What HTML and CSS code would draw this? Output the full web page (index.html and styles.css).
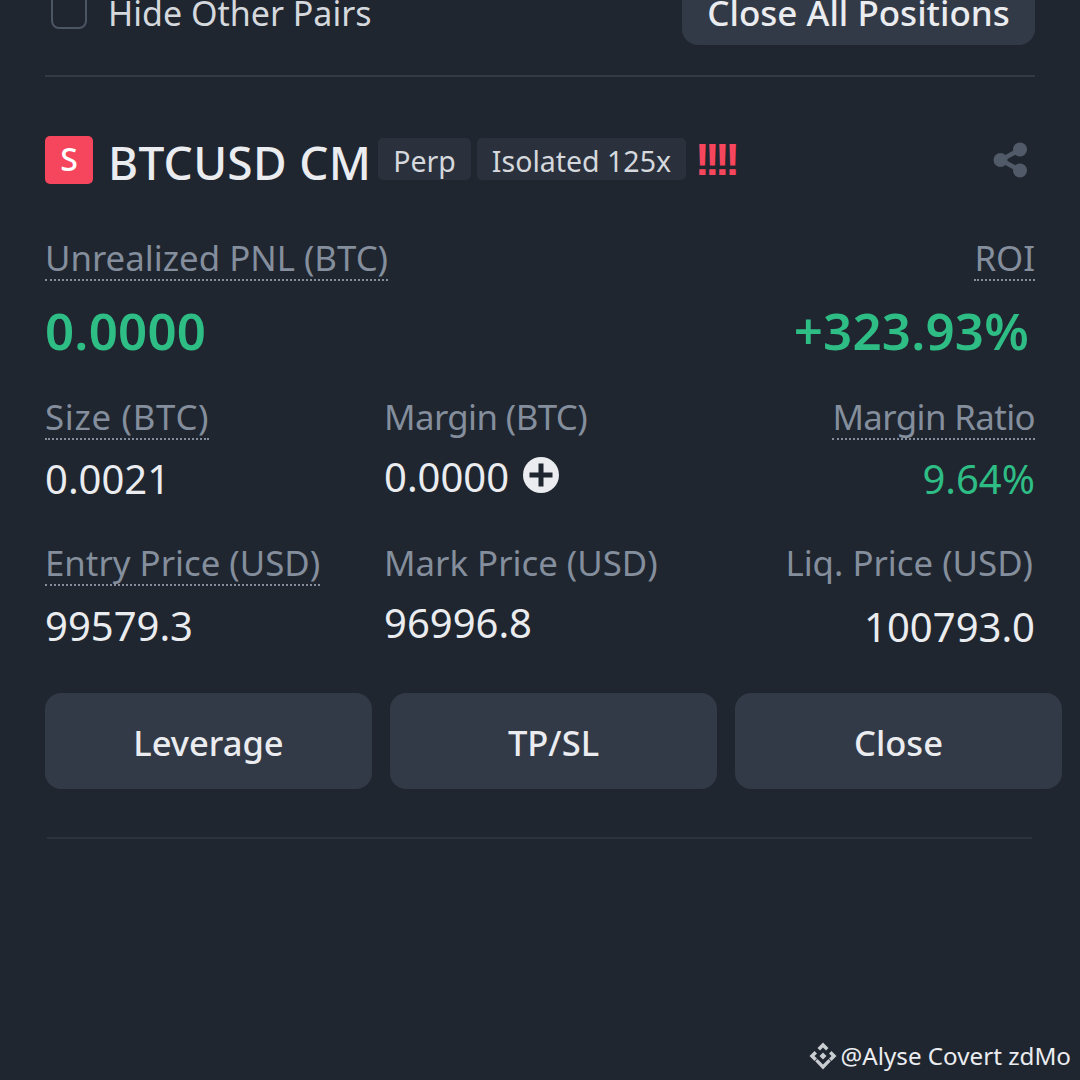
FILE: index.html
```html
<!DOCTYPE html>
<html lang="en">
<head>
  <meta charset="UTF-8">
  <meta name="viewport" content="width=device-width, initial-scale=1.0">
  <title>Positions</title>
  <link rel="stylesheet" href="styles.css">
</head>
<body>
  <div class="page">
    <div class="top-bar">
      <label class="hide-pairs"><span class="checkbox"></span>Hide Other Pairs</label>
      <button class="close-all">Close All Positions</button>
    </div>
    <div class="divider"></div>

    <div class="position-head">
      <span class="side-badge">S</span>
      <span class="symbol">BTCUSD CM</span>
      <span class="tag">Perp</span>
      <span class="tag">Isolated 125x</span>
      <span class="risk">!!!!</span>
      <svg class="share" width="36" height="36" viewBox="0 0 36 36">
        <path d="M8 18 L27 7.5 M8 18 L27 28.5" stroke="#515a68" stroke-width="4.5" fill="none"/>
        <circle cx="7.5" cy="18" r="7" fill="#515a68"/>
        <circle cx="27" cy="7.5" r="7" fill="#515a68"/>
        <circle cx="27" cy="28.500" r="7" fill="#515a68"/>
      </svg>
    </div>

    <div class="pnl-row">
      <div>
        <div class="label"><span class="dotted">Unrealized PNL (BTC)</span></div>
        <div class="pnl green">0.0000</div>
      </div>
      <div class="right">
        <div class="label"><span class="dotted">ROI</span></div>
        <div class="pnl green roi">+323.93%</div>
      </div>
    </div>

    <div class="stats">
      <div>
        <div class="label wide"><span class="dotted">Size (BTC)</span></div>
        <div class="value">0.0021</div>
      </div>
      <div>
        <div class="label tight">Margin (BTC)</div>
        <div class="value value-margin">0.0000
          <svg class="plus" width="36" height="36" viewBox="0 0 36 36">
            <circle cx="18" cy="18" r="18" fill="#eaecef"/>
            <path d="M15.5 6.5h5v9h9v5h-9v9h-5v-9h-9v-5h9z" fill="#1f2630"/>
          </svg>
        </div>
      </div>
      <div class="right">
        <div class="label tight"><span class="dotted">Margin Ratio</span></div>
        <div class="value green">9.64%</div>
      </div>
      <div>
        <div class="label"><span class="dotted">Entry Price (USD)</span></div>
        <div class="value value-entry">99579.3</div>
      </div>
      <div>
        <div class="label">Mark Price (USD)</div>
        <div class="value value-mark">96996.8</div>
      </div>
      <div class="right">
        <div class="label label-liq">Liq. Price (USD)</div>
        <div class="value value-liq">100793.0</div>
      </div>
    </div>

    <div class="actions">
      <button>Leverage</button>
      <button>TP/SL</button>
      <button>Close</button>
    </div>
    <div class="divider divider-low"></div>
  </div>

  <div class="watermark">
    <svg width="28" height="28" viewBox="0 0 28 28">
      <path d="M14 0.500l5.500 5.500-2.500 2.500-3-3-3 3-2.500-2.500zM5.500 9l2.500 2.500L5.500 14 8 16.500 5.500 19 0.500 14zM22.500 9l5 5-5 5-2.500-2.500 2.500-2.500-2.500-2.500zM14 10.500l3.500 3.500-3.500 3.500-3.500-3.500zM8.500 17l5.500 5.500 5.500-5.500 2.300 2.300L14 27.500 6.200 19.300z" fill="#c9ccd1"/>
    </svg>
    <span>@Alyse Covert zdMo</span>
  </div>
</body>
</html>
```

FILE: styles.css
```css
body {
  font-family: "Noto Sans", sans-serif;
  background-color: #1f2630;
  color: #eaecef;
  margin: 0;
  width: 1080px;
  height: 1080px;
  overflow: hidden;
  position: relative;
}
.page {
  padding: 0 45px;
}
.top-bar {
  height: 45px;
  display: flex;
  justify-content: space-between;
  align-items: flex-end;
  overflow: hidden;
}
.hide-pairs {
  display: flex;
  align-items: center;
  font-size: 34px;
  color: #d5d8dd;
  height: 60px;
  padding-left: 6px;
  padding-bottom: 32px;
  margin-bottom: -30px;
}
.checkbox {
  width: 32px;
  height: 32px;
  border: 2px solid #4b5563;
  border-radius: 8px;
  margin-right: 21px;
  margin-bottom: 4px;
}
.close-all {
  width: 353px;
  height: 70px;
  background-color: #333a47;
  color: #eaecef;
  border: none;
  border-radius: 0 0 16px 16px;
  font-family: inherit;
  font-size: 35px;
  font-weight: 500;
  padding: 4px 0 0;
  white-space: nowrap;
}
.divider {
  height: 2px;
  background-color: #333a46;
  margin-top: 30px;
}
.divider-low {
  background-color: #2c333e;
  margin: 48px 3px 0 2px;
}
.position-head {
  display: flex;
  align-items: center;
  margin-top: 58px;
  height: 50px;
}
.side-badge {
  width: 48px;
  height: 48px;
  background-color: #f6465d;
  border-radius: 5px;
  color: white;
  font-size: 32px;
  font-weight: 500;
  text-align: center;
  line-height: 46px;
  margin-right: 15px;
}
.symbol {
  font-size: 46px;
  font-weight: 500;
  letter-spacing: 0.3px;
  margin-right: 7px;
  padding-top: 4px;
  white-space: nowrap;
}
.tag {
  background-color: #2a313c;
  color: #d5d8dd;
  font-size: 28.5px;
  height: 42px;
  line-height: 46px;
  padding: 0 15px;
  border-radius: 5px;
  margin-right: 6px;
  margin-bottom: 2px;
}
.risk {
  color: #f6465d;
  font-family: "Liberation Sans", sans-serif;
  font-size: 44px;
  font-weight: 700;
  margin-left: 3px;
  letter-spacing: -4.6px;
}
.share {
  margin-left: auto;
  margin-right: 6px;
}
.pnl-row {
  display: flex;
  justify-content: space-between;
  margin-top: 52px;
}
.label {
  color: #848e9c;
  font-size: 34.8px;
  line-height: 42px;
  white-space: nowrap;
}
.tight {
  letter-spacing: -0.6px;
}
.wide {
  letter-spacing: 0.7px;
}
.label-liq {
  margin-right: 2px;
}
.dotted {
  border-bottom: 2px dotted #848e9c;
  display: inline-block;
}
.pnl {
  font-size: 51px;
  font-weight: 600;
  letter-spacing: 0.2px;
  line-height: 60px;
  margin-top: 19px;
}
.roi {
  margin-right: 6px;
}
.green {
  color: #2ebd85;
}
.right {
  text-align: right;
}
.stats {
  display: grid;
  grid-template-columns: 339px 1fr 1fr;
  row-gap: 38px;
  margin-top: 36px;
}
.value {
  font-size: 40px;
  line-height: 50px;
  margin-top: 14px;
  white-space: nowrap;
}
.value-entry {
  margin-top: 15px;
}
.value-mark {
  margin-top: 14px;
}
.value-liq {
  margin-top: 18px;
}
.plus {
  vertical-align: -1px;
  margin-left: 3px;
}
.actions {
  display: grid;
  grid-template-columns: repeat(3, 327px);
  column-gap: 18px;
  margin-top: 41px;
}
.actions button {
  height: 96px;
  background-color: #333a47;
  color: #eaecef;
  border: none;
  border-radius: 16px;
  font-family: inherit;
  font-size: 34.5px;
  font-weight: 500;
  padding: 3px 0 0;
}
.watermark {
  position: absolute;
  right: 9px;
  bottom: 8px;
  display: flex;
  align-items: center;
  gap: 4px;
  font-size: 24.2px;
  color: #eaecef;
}
```
